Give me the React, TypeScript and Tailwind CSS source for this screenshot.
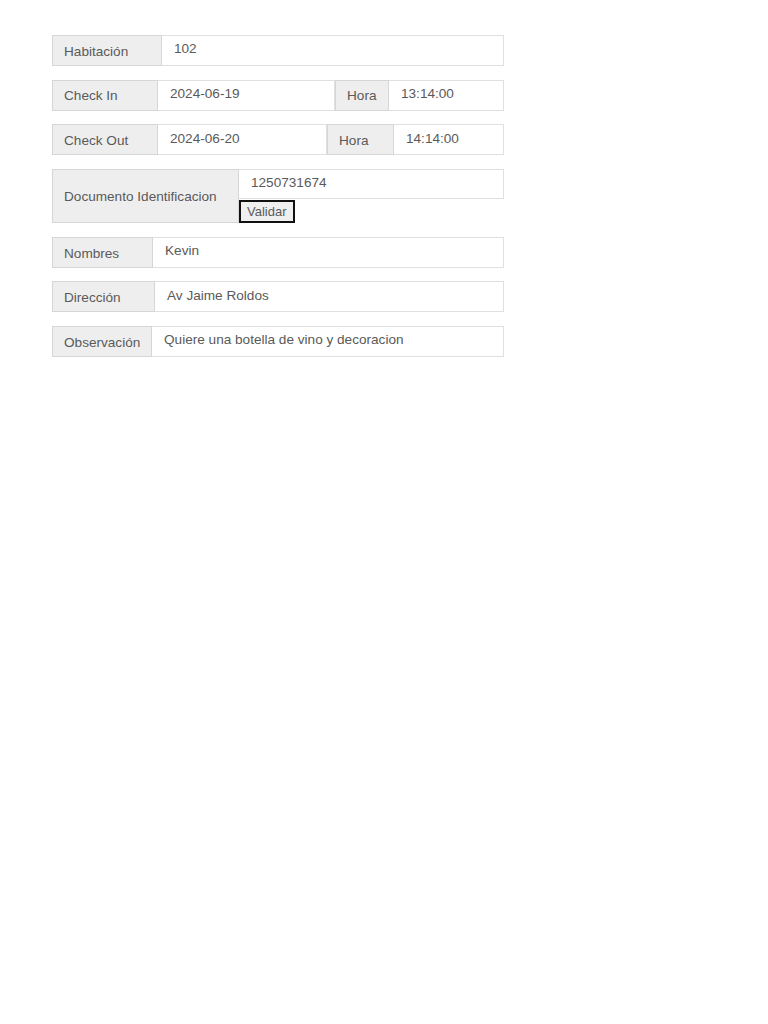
const Label = ({ text, w, className = "" }: { text: string; w: string; className?: string }) => (
  <div
    className={`${w} ${className} flex items-center pl-[11px] pt-[3px] bg-[#eeeeee] border border-[#d6d6d6] text-[13.6px] text-[#5a5a5a] shrink-0`}
  >
    {text}
  </div>
);

const Field = ({ value, className = "" }: { value: string; className?: string }) => (
  <div
    className={`${className} flex items-center pl-3 pb-[2px] bg-white border border-[#e0e0e0] border-l-0 text-[13.6px] text-[#5a5a5a]`}
  >
    {value}
  </div>
);

const App = () => {
  return (
    <div className="min-h-screen bg-white font-['Liberation_Sans',Arial,sans-serif]">
      <div className="pt-[35px] pl-[52px] w-[504px] flex flex-col gap-[13.7px]">
        <div className="flex h-[31px]">
          <Label text="Habitación" w="w-[110px]" />
          <Field value="102" className="flex-1" />
        </div>

        <div className="flex h-[31px]">
          <Label text="Check In" w="w-[106px]" />
          <Field value="2024-06-19" className="w-[177px]" />
          <Label text="Hora" w="w-[54px]" />
          <Field value="13:14:00" className="flex-1" />
        </div>

        <div className="flex h-[31px]">
          <Label text="Check Out" w="w-[106px]" />
          <Field value="2024-06-20" className="w-[169px]" />
          <Label text="Hora" w="w-[67px]" />
          <Field value="14:14:00" className="flex-1" />
        </div>

        <div className="flex h-[54px]">
          <Label text="Documento Identificacion" w="w-[187px]" />
          <div className="flex-1 flex flex-col">
            <Field value="1250731674" className="h-[31px]" />
            <div>
              <button className="h-[23px] px-[6px] bg-[#efefef] border-2 border-[#111111] text-[13px] text-[#5a5a5a] leading-none">
                Validar
              </button>
            </div>
          </div>
        </div>

        <div className="flex h-[31px]">
          <Label text="Nombres" w="w-[101px]" />
          <Field value="Kevin" className="flex-1" />
        </div>

        <div className="flex h-[31px]">
          <Label text="Dirección" w="w-[103px]" />
          <Field value="Av Jaime Roldos" className="flex-1" />
        </div>

        <div className="flex h-[31px]">
          <Label text="Observación" w="w-[100px]" />
          <Field value="Quiere una botella de vino y decoracion" className="flex-1" />
        </div>
      </div>
    </div>
  );
};

export default App;
